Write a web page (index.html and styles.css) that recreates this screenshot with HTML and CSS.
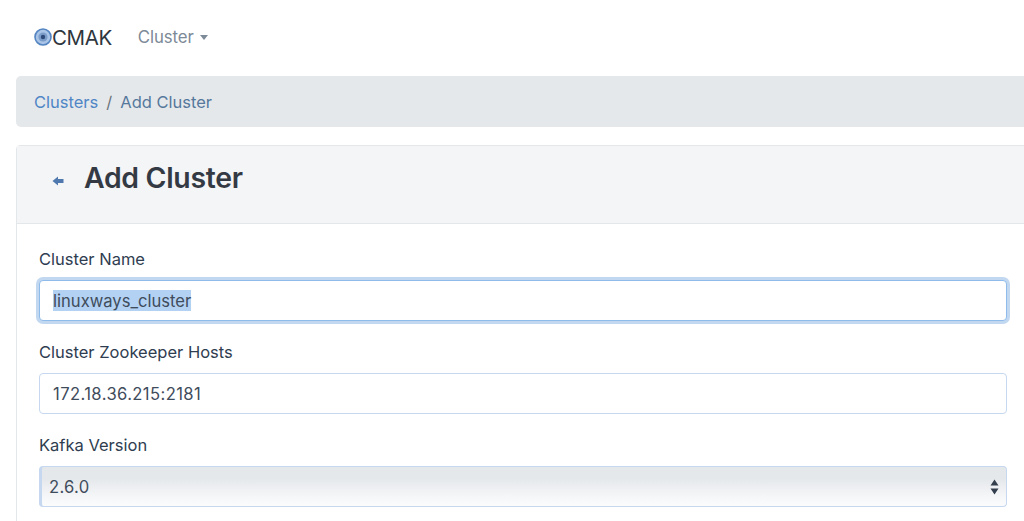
FILE: index.html
```html
<!DOCTYPE html>
<html lang="en">

<head>
    <meta charset="UTF-8">
    <meta name="viewport" content="width=device-width, initial-scale=1.0">
    <title>Add Cluster</title>
    <link rel="stylesheet" href="styles.css">
</head>

<body>
    <nav class="navbar">
        <a class="brand" href="#">
            <svg class="brand-logo" viewBox="0 0 18 18" width="18" height="18">
                <circle cx="9" cy="9" r="8" fill="#a9c4e6" stroke="#5485c2" stroke-width="1.6" />
                <circle cx="9" cy="9" r="4.6" fill="#7c9dca" />
                <circle cx="9" cy="9" r="2.2" fill="#2f4a78" />
            </svg>CMAK
        </a>
        <a class="nav-link" href="#">Cluster<span class="caret"></span></a>
    </nav>

    <main class="page">
        <div class="breadcrumb">
            <a href="#">Clusters</a>
            <span class="sep">/</span>
            <span class="current">Add Cluster</span>
        </div>

        <section class="card">
            <header class="card-header">
                <svg class="back" viewBox="0 0 12 10" width="12" height="10">
                    <path d="M0.5 5 L6 0.5 V3 H11.5 V7 H6 V9.5 Z" fill="#4f79ae" />
                </svg>
                <h1>Add Cluster</h1>
            </header>

            <form class="card-body">
                <div class="form-group">
                    <label for="name">Cluster Name</label>
                    <div class="form-control focused" id="name"><span class="selected">linuxways_cluster</span></div>
                </div>
                <div class="form-group">
                    <label for="hosts">Cluster Zookeeper Hosts</label>
                    <input class="form-control hosts" id="hosts" type="text" value="172.18.36.215:2181">
                </div>
                <div class="form-group">
                    <label>Kafka Version</label>
                    <div class="form-control select">
                        <span>2.6.0</span>
                        <svg class="updown" viewBox="0 0 9 16" width="9" height="16">
                            <path d="M4.5 0.5 L8.5 6.5 H0.5 Z M0.5 9.5 H8.5 L4.5 15.5 Z" fill="#343f4e" />
                        </svg>
                    </div>
                </div>
            </form>
        </section>
    </main>
</body>

</html>
```

FILE: styles.css
```css
html,
body {
    height: 521px;
    overflow: hidden;
}

body {
    font-family: Inter, "Noto Sans", sans-serif;
    font-size: 16px;
    color: #2f3d50;
    margin: 0;
    padding: 0;
    background-color: #fff;
}

a {
    text-decoration: none;
}

.navbar {
    display: flex;
    align-items: center;
    height: 76px;
    padding: 0 34px 2px;
    box-sizing: border-box;
}

.brand {
    display: flex;
    align-items: center;
    color: #2f363d;
    font-size: 20.5px;
    letter-spacing: -0.4px;
    margin-right: 26px;
}

.nav-link {
    color: #7d8a97;
    font-size: 16.8px;
    letter-spacing: -0.1px;
}

.caret {
    display: inline-block;
    margin-left: 6px;
    vertical-align: 3px;
    border-top: 5px solid #7d8a97;
    border-left: 4.5px solid transparent;
    border-right: 4.5px solid transparent;
}

.page {
    width: 1014px;
    margin-left: 16px;
}

.breadcrumb {
    display: flex;
    align-items: center;
    height: 51px;
    padding-left: 18px;
    margin-bottom: 18px;
    background-color: #e5e8eb;
    border-radius: 5px;
    font-size: 16.5px;
}

.breadcrumb a {
    color: #4f86c6;
}

.breadcrumb .sep {
    color: #6c757d;
    margin: 0 8px;
}

.breadcrumb .current {
    color: #56789c;
}

.card {
    border: 1px solid #e4e7ea;
    border-radius: 4px;
}

.card-header {
    display: flex;
    align-items: center;
    height: 78px;
    background-color: #f4f5f7;
    border-bottom: 1px solid #e4e7ea;
    box-sizing: border-box;
    padding: 0 0 14px 35px;
}

.back {
    margin-top: 6px;
}

.card-header h1 {
    margin: 0 0 0 20px;
    font-size: 28.4px;
    font-weight: 600;
    letter-spacing: -0.3px;
    color: #343a44;
}

.card-body {
    padding: 23px 22px 0;
}

.form-group {
    margin-bottom: 19px;
}

.form-group label {
    display: block;
    font-size: 16.5px;
    line-height: 24px;
    margin-bottom: 9px;
}

.form-control {
    display: flex;
    align-items: center;
    width: 100%;
    height: 41px;
    box-sizing: border-box;
    padding: 0 13px;
    border: 1px solid #c5d8ef;
    border-radius: 4px;
    font-family: inherit;
    font-size: 16.6px;
    color: #3f4c5c;
    background-color: #fff;
}

.hosts {
    letter-spacing: 0.4px;
}

.focused {
    border-color: #8fbbea;
    box-shadow: 0 0 0 3px #c2d8f1;
}

.selected {
    background-color: #b3d2f3;
    padding: 0.5px 0;
}

.select {
    justify-content: space-between;
    padding: 0 7px;
    background: linear-gradient(#e5e8eb 30%, #f5f6f8 75%, #fbfbfc);
    border-left-width: 3px;
    letter-spacing: 0.3px;
}
```
